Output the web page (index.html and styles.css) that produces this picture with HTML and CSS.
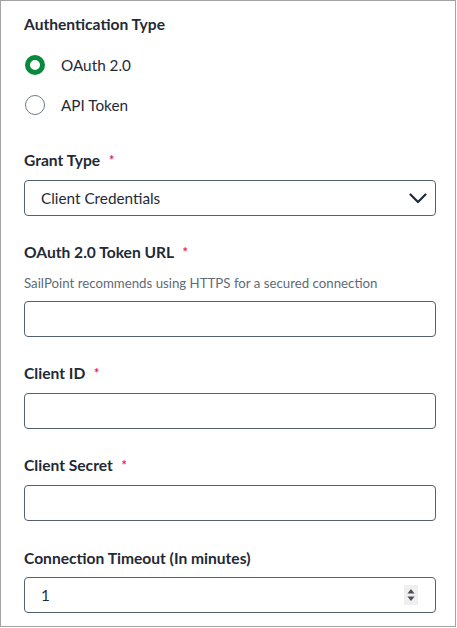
FILE: index.html
```html
<!DOCTYPE html>
<html>
<head>
<meta charset="utf-8">
<link rel="stylesheet" href="styles.css">
</head>
<body>
<div class="panel">
  <div class="field">
    <div class="label">Authentication Type</div>
    <div class="radios">
      <label class="radio"><span class="dot checked"></span><span>OAuth 2.0</span></label>
      <label class="radio"><span class="dot"></span><span>API Token</span></label>
    </div>
  </div>

  <div class="field">
    <div class="label">Grant Type <span class="req">*</span></div>
    <div class="input select">
      <span>Client Credentials</span>
      <svg class="chev" width="18" height="11" viewBox="0 0 18 11"><path d="M1.5 1.5 L9 9 L16.5 1.5" fill="none" stroke="#1f2a36" stroke-width="2.2" stroke-linecap="round" stroke-linejoin="round"/></svg>
    </div>
  </div>

  <div class="field">
    <div class="label">OAuth 2.0 Token URL <span class="req">*</span></div>
    <div class="help">SailPoint recommends using HTTPS for a secured connection</div>
    <div class="input"></div>
  </div>

  <div class="field">
    <div class="label">Client ID <span class="req">*</span></div>
    <div class="input"></div>
  </div>

  <div class="field">
    <div class="label">Client Secret <span class="req">*</span></div>
    <div class="input"></div>
  </div>

  <div class="field last">
    <div class="label">Connection Timeout (In minutes)</div>
    <div class="input number">
      <span>1</span>
      <span class="spin">
        <svg width="14" height="20" viewBox="0 0 14 20"><path d="M7 4 L10.5 8.5 L3.5 8.5 Z" fill="#4a4f55"/><path d="M3.5 11.5 L10.5 11.5 L7 16 Z" fill="#4a4f55"/></svg>
      </span>
    </div>
  </div>
</div>
</body>
</html>
```

FILE: styles.css
```css
html, body {
  margin: 0;
  padding: 0;
  background: #ffffff;
}
body {
  font-family: "Lato", "Noto Sans", sans-serif;
  color: #1f2a36;
}
.panel {
  box-sizing: border-box;
  width: 456px;
  height: 627px;
  border: 1px solid #a3a3a3;
  padding: 13px 19px 0 23px;
  display: flex;
  flex-direction: column;
  gap: 26px;
}
.field {
  display: flex;
  flex-direction: column;
  gap: 9px;
}
.field.last {
  margin-top: 1px;
}
.label {
  font-size: 15.6px;
  font-weight: 700;
  line-height: 20px;
  color: #1f2a36;
}
.req {
  color: #e5265e;
  font-size: 12.5px;
  font-weight: 700;
  margin-left: 5px;
  vertical-align: 1px;
}
.help {
  font-size: 13.25px;
  line-height: 18px;
  color: #5e6b78;
  margin-top: 2px;
}
.radios {
  display: flex;
  flex-direction: column;
  gap: 16px;
  margin-top: 10px;
  margin-bottom: 7px;
}
.radio {
  display: flex;
  align-items: center;
  gap: 16px;
  height: 24px;
  font-size: 15.3px;
  color: #1f2a36;
}
.dot {
  box-sizing: border-box;
  width: 20px;
  height: 20px;
  border-radius: 50%;
  border: 1.5px solid #6f7b88;
  margin-left: 1px;
}
.dot.checked {
  border: 5px solid #078a3c;
}
.input {
  box-sizing: border-box;
  height: 36px;
  border: 1px solid #54616f;
  border-radius: 4px;
  display: flex;
  align-items: center;
  padding: 0 8px 0 16px;
  font-size: 15.3px;
  color: #1f2a36;
}
.select {
  justify-content: space-between;
}
.number {
  justify-content: space-between;
}
.spin {
  display: flex;
  background: #efefef;
  width: 14px;
  height: 20px;
  margin-right: 9px;
}
```
